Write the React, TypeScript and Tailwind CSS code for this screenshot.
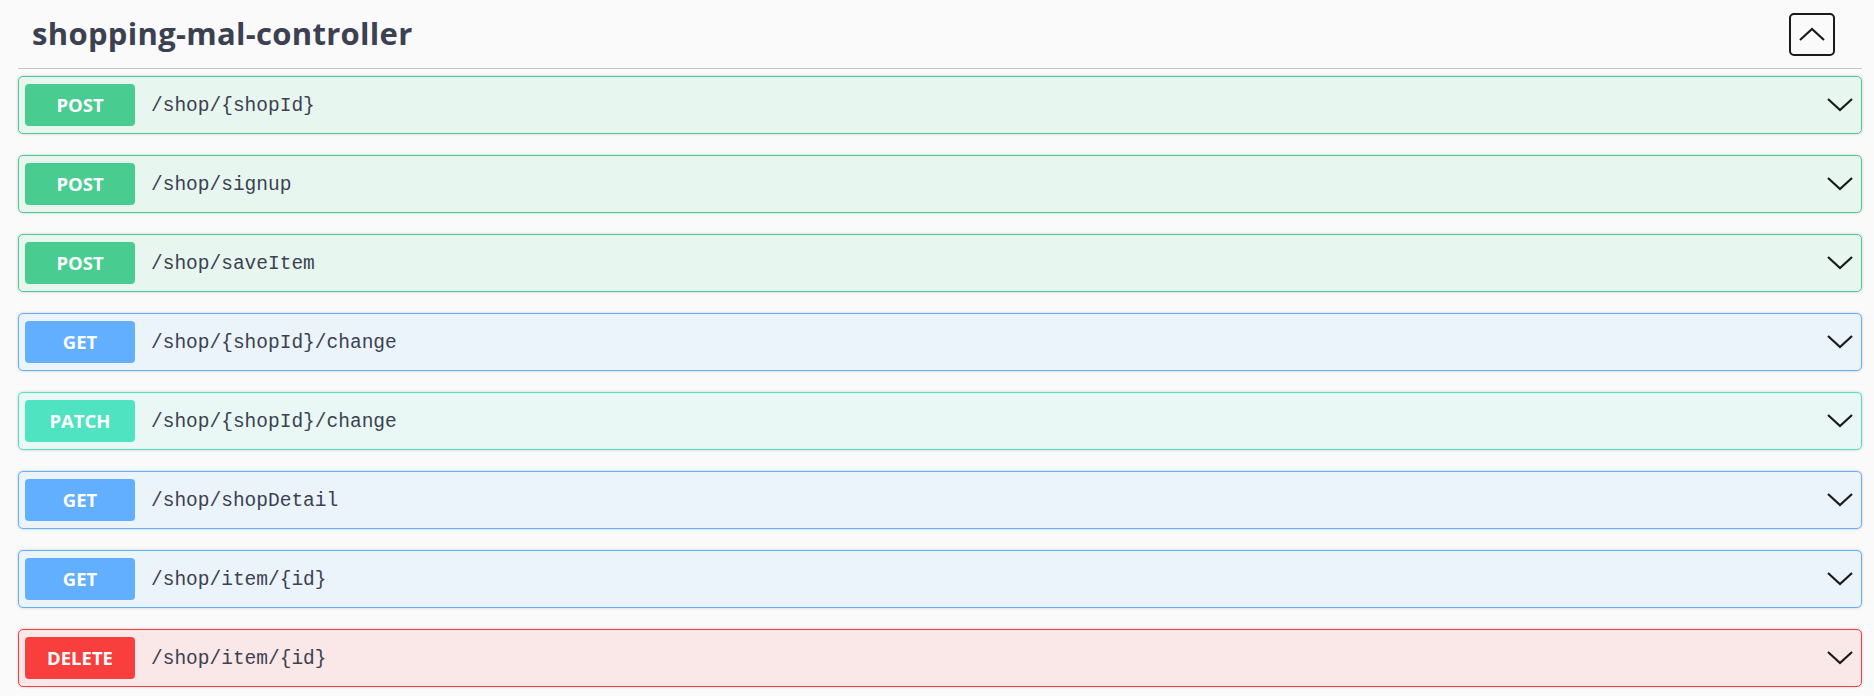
const endpoints = [
  { method: 'POST', path: '/shop/{shopId}' },
  { method: 'POST', path: '/shop/signup' },
  { method: 'POST', path: '/shop/saveItem' },
  { method: 'GET', path: '/shop/{shopId}/change' },
  { method: 'PATCH', path: '/shop/{shopId}/change' },
  { method: 'GET', path: '/shop/shopDetail' },
  { method: 'GET', path: '/shop/item/{id}' },
  { method: 'DELETE', path: '/shop/item/{id}' },
];

// Colour set per HTTP method
const styles: Record<string, { box: string; badge: string }> = {
  POST: { box: 'border-[#49cc90] bg-[#e8f6f0]', badge: 'bg-[#49cc90]' },
  GET: { box: 'border-[#61affe] bg-[#ebf3fb]', badge: 'bg-[#61affe]' },
  PATCH: { box: 'border-[#50e3c2] bg-[#e9f8f5]', badge: 'bg-[#50e3c2]' },
  DELETE: { box: 'border-[#f93e3e] bg-[#fae7e7]', badge: 'bg-[#f93e3e]' },
};

const Chevron = ({ up = false }: { up?: boolean }) => (
  <svg width="26" height="14" viewBox="0 0 26 14" fill="none">
    <path
      d={up ? 'M1 13L13 2L25 13' : 'M1 1L13 12L25 1'}
      stroke="#1a1a1a"
      strokeWidth="2.2"
    />
  </svg>
);

const OpBlock = ({ method, path }: { method: string; path: string }) => {
  const s = styles[method];
  return (
    <div
      className={`mb-[21px] flex h-[58px] items-center rounded-[5px] border shadow-[0_0_3px_rgba(0,0,0,0.19)] ${s.box}`}
    >
      <span
        className={`ml-[6px] flex h-[42px] w-[110px] items-center justify-center rounded-[4px] font-['Open_Sans',sans-serif] text-[18.5px] font-bold text-white ${s.badge}`}
      >
        {method}
      </span>
      <span className="ml-4 flex-1 pt-[3px] font-['Liberation_Mono',monospace] text-[19.5px] text-[#3b4151]">
        {path}
      </span>
      <span className="mr-[8px] flex items-center">
        <Chevron />
      </span>
    </div>
  );
};

export default function App() {
  return (
    <div className="min-h-[696px] bg-[#fafafa] pl-[18px] pr-[12px]">
      <div className="flex h-[69px] items-center justify-between border-b border-[#c4c5c9]">
        <h3 className="pl-[14px] pb-[1px] font-['Open_Sans',sans-serif] text-[31px] font-bold tracking-[0.3px] text-[#3b4151]">
          shopping-mal-controller
        </h3>
        <button className="mr-[27px] flex h-[43px] w-[46px] items-center justify-center rounded-[5px] border-2 border-[#1a1a1a]">
          <Chevron up />
        </button>
      </div>
      <div className="pt-[7px]">
        {endpoints.map((e, i) => (
          <OpBlock key={i} method={e.method} path={e.path} />
        ))}
      </div>
    </div>
  );
}
